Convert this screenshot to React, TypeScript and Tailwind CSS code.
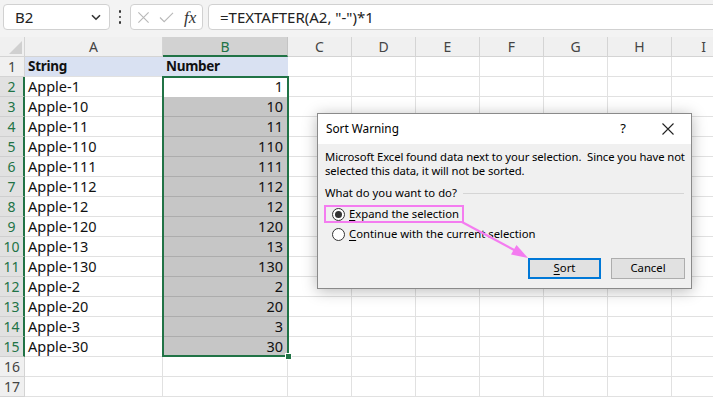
import React from "react";

const data: [string, string][] = [
  ["String", "Number"],
  ["Apple-1", "1"],
  ["Apple-10", "10"],
  ["Apple-11", "11"],
  ["Apple-110", "110"],
  ["Apple-111", "111"],
  ["Apple-112", "112"],
  ["Apple-12", "12"],
  ["Apple-120", "120"],
  ["Apple-13", "13"],
  ["Apple-130", "130"],
  ["Apple-2", "2"],
  ["Apple-20", "20"],
  ["Apple-3", "3"],
  ["Apple-30", "30"],
  ["", ""],
  ["", ""],
];

const cols = ["A", "B", "C", "D", "E", "F", "G", "H", "I"];
const font = { fontFamily: '"Noto Sans", "Open Sans", sans-serif' };

function TopBar() {
  return (
    <div className="h-[37px] bg-[#f3f3f3] flex items-start pt-[4px] pl-[3px]">
      <div className="shrink-0 w-[107px] h-[26px] bg-white border border-[#d1d1d1] rounded-[4px] flex items-center pl-[11px] pr-[8px] text-[15px] text-[#222]">
        <span>B2</span>
        <svg className="ml-auto" width="10" height="7" viewBox="0 0 10 7">
          <path d="M1 1.2 L5 5.2 L9 1.2" fill="none" stroke="#333" strokeWidth="1.6" />
        </svg>
      </div>
      <div className="shrink-0 w-[20px] h-[26px] flex flex-col items-center justify-center gap-[3px]">
        <div className="w-[2.5px] h-[2.5px] bg-[#333] rounded-full" />
        <div className="w-[2.5px] h-[2.5px] bg-[#333] rounded-full" />
        <div className="w-[2.5px] h-[2.5px] bg-[#333] rounded-full" />
      </div>
      <div className="shrink-0 w-[73px] h-[26px] bg-white border border-[#d1d1d1] rounded-[4px] flex items-center pl-[6px]">
        <svg width="13" height="13" viewBox="0 0 14 14">
          <path d="M1.5 1.5 L12.5 12.5 M12.5 1.5 L1.5 12.5" stroke="#b8b8b8" strokeWidth="1.2" fill="none" />
        </svg>
        <svg className="ml-[9px]" width="15" height="13" viewBox="0 0 16 14">
          <path d="M1 7 L5.5 11.5 L15 2" stroke="#b8b8b8" strokeWidth="1.2" fill="none" />
        </svg>
        <span
          className="ml-[10px] text-[17px] italic text-[#333] leading-none"
          style={{ fontFamily: '"Liberation Serif", "DejaVu Serif", serif' }}
        >
          fx
        </span>
      </div>
      <div className="shrink-0 ml-[5px] w-[560px] h-[26px] bg-white border border-[#d1d1d1] rounded-[4px] flex items-center pl-[11px] text-[15px] text-[#222]">
        =TEXTAFTER(A2, "-")*1
      </div>
    </div>
  );
}

function Grid() {
  return (
    <div className="relative">
      <div className="grid grid-cols-[25px_138px_125px_64px_64px_64px_64px_64px_64px_64px] w-[736px] text-[14.5px]">
        <div className="h-[20px] bg-[#f0f0f0] border-r border-b border-[#d4d4d4] flex items-end justify-end p-[2px]">
          <div className="w-[13px] h-[13px] bg-[#d0d0d0] [clip-path:polygon(100%_0,100%_100%,0_100%)]" />
        </div>
        {cols.map((c) =>
          c === "B" ? (
            <div
              key={c}
              className="h-[20px] bg-[#d2d2d2] border-r border-[#c4c4c4] border-b-2 border-b-[#217346] flex items-center justify-center text-[#217346] text-[14px]"
            >
              {c}
            </div>
          ) : (
            <div
              key={c}
              className="h-[20px] bg-[#f0f0f0] border-r border-b border-[#d4d4d4] flex items-center justify-center text-[#444] text-[14px]"
            >
              {c}
            </div>
          )
        )}
        {data.map((row, i) => {
          const r = i + 1;
          const sel = r >= 2 && r <= 15;
          return (
            <React.Fragment key={r}>
              {sel ? (
                <div className="h-[20px] bg-[#e1e1e1] border-b border-[#cfcfcf] border-r-2 border-r-[#217346] flex items-center justify-center text-[#217346] text-[14px]">
                  {r}
                </div>
              ) : (
                <div className="h-[20px] bg-[#f0f0f0] border-r border-b border-[#d4d4d4] flex items-center justify-center text-[#444] text-[14px]">
                  {r}
                </div>
              )}
              {r === 1 ? (
                <div className="h-[20px] bg-[#d9e1f2] border-b border-[#e1e1e1] flex items-center pl-[3px] font-bold text-[13.5px] tracking-[-0.3px] text-[#111]">
                  {row[0]}
                </div>
              ) : (
                <div className="h-[20px] bg-white border-r border-b border-[#e1e1e1] flex items-center pl-[3px] text-[#111]">
                  {row[0]}
                </div>
              )}
              {r === 1 ? (
                <div className="h-[20px] bg-[#d9e1f2] border-b border-[#e1e1e1] flex items-center pl-[3px] font-bold text-[13.5px] tracking-[-0.3px] text-[#111]">
                  {row[1]}
                </div>
              ) : r === 2 ? (
                <div className="h-[20px] bg-white flex items-center justify-end pr-[5px] text-[#111]">
                  {row[1]}
                </div>
              ) : sel ? (
                <div className="h-[20px] bg-[#c6c6c6] border-b border-[#acacac] flex items-center justify-end pr-[5px] text-[#111]">
                  {row[1]}
                </div>
              ) : (
                <div className="h-[20px] bg-white border-r border-b border-[#e1e1e1]" />
              )}
              {cols.slice(2).map((c) => (
                <div key={c} className="h-[20px] bg-white border-r border-b border-[#e1e1e1]" />
              ))}
            </React.Fragment>
          );
        })}
      </div>
      <div className="absolute left-[162px] top-[39px] w-[127px] h-[281px] border-2 border-[#217346] pointer-events-none" />
      <div className="absolute left-[285px] top-[316px] w-[7px] h-[7px] bg-[#217346] border border-white pointer-events-none" />
    </div>
  );
}

function Radio({ checked }: { checked: boolean }) {
  return (
    <div className="shrink-0 w-[13px] h-[13px] rounded-full border border-[#333] bg-white flex items-center justify-center">
      {checked && <div className="w-[7px] h-[7px] rounded-full bg-[#333]" />}
    </div>
  );
}

function Dialog() {
  return (
    <div className="absolute left-[317px] top-[113px] w-[375px] h-[176px] border border-[#8a8a8a] bg-[#f0f0f0] shadow-[0_2px_14px_rgba(0,0,0,0.28)] flex flex-col text-[11.3px] text-black whitespace-nowrap">
      <div className="h-[30px] bg-white flex items-center pl-[8px] text-[11.8px]">
        <span>Sort Warning</span>
        <span className="ml-auto text-[13px]">?</span>
        <svg className="ml-[36px] mr-[17px]" width="12" height="12" viewBox="0 0 12 12">
          <path d="M0.5 0.5 L11.5 11.5 M11.5 0.5 L0.5 11.5" stroke="#222" strokeWidth="1.1" fill="none" />
        </svg>
      </div>
      <div className="flex-1 flex flex-col pl-[7px] pr-[6px] pt-[6px]">
        <p className="leading-[14px] tracking-[-0.1px]">
          Microsoft Excel found data next to your selection.&nbsp; Since you have not
          <br />
          selected this data, it will not be sorted.
        </p>
        <div className="mt-[8px] h-[14px] flex items-center">
          <span className="leading-[14px]">What do you want to do?</span>
          <div className="ml-[6px] mr-[1px] flex-1 h-px bg-[#d5d5d5]" />
        </div>
        <div className="mt-[5px] -ml-[1px] w-[140px] h-[18px] border-2 border-[#f47cf0] flex items-center pl-[6px] gap-[4px]">
          <Radio checked />
          <span className="leading-[14px]">
            <span className="underline underline-offset-2">E</span>xpand the selection
          </span>
        </div>
        <div className="mt-[4px] h-[14px] flex items-center pl-[7px] gap-[4px]">
          <Radio checked={false} />
          <span className="leading-[14px]">
            <span className="underline underline-offset-2">C</span>ontinue with the current selection
          </span>
        </div>
        <div className="mt-[17px] flex justify-end gap-[10px]">
          <div className="w-[73px] h-[21px] bg-[#e1e1e1] border-2 border-[#0078d7] flex items-center justify-center">
            <span>
              <span className="underline underline-offset-2">S</span>ort
            </span>
          </div>
          <div className="w-[74px] h-[21px] bg-[#e1e1e1] border border-[#adadad] flex items-center justify-center">
            Cancel
          </div>
        </div>
      </div>
    </div>
  );
}

function Arrow() {
  return (
    <svg className="absolute left-0 top-0 pointer-events-none" width="713" height="397" viewBox="0 0 713 397">
      <line x1="462" y1="222" x2="516" y2="251" stroke="#f47cf0" strokeWidth="2.2" />
      <polygon points="528,258 511,254.5 516.5,245" fill="#f47cf0" />
    </svg>
  );
}

export default function App() {
  return (
    <div className="relative w-[713px] h-[397px] overflow-hidden bg-white" style={font}>
      <TopBar />
      <Grid />
      <Dialog />
      <Arrow />
    </div>
  );
}
